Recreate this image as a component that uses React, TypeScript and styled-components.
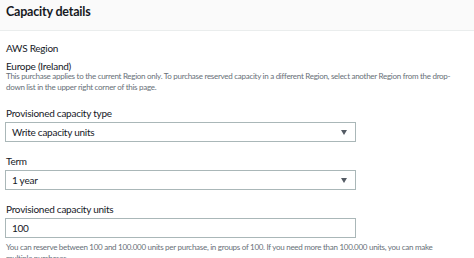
import styled, { createGlobalStyle } from "styled-components"

const Global = createGlobalStyle`
	html, body {
		margin: 0;
		padding: 0;
		background: #fff;
	}
	body {
		font-family: Lato, "Noto Sans", sans-serif;
		color: #16191f;
	}
`

const Panel = styled.div`
	width: 474px;
	height: 258px;
	overflow: hidden;
	background: #fff;
`

const Header = styled.div`
	height: 30px;
	box-sizing: border-box;
	padding: 4px 6px 0;
	background: #fafafa;
	border-bottom: 1px solid #eaeded;
	box-sizing: content-box;
	height: 26px;

	h2 {
		margin: 0;
		font-size: 12.5px;
		line-height: 15px;
		font-weight: 700;
		letter-spacing: -0.2px;
	}
`

const Body = styled.div`
	padding: 10px 14px 0 6px;
	display: flex;
	flex-direction: column;
`

const Field = styled.div<{ $gap?: number }>`
	display: flex;
	flex-direction: column;
	margin-bottom: ${(p) => p.$gap ?? 12}px;
`

const Label = styled.div`
	font-size: 10px;
	line-height: 14px;
	letter-spacing: -0.25px;
	margin-bottom: 2px;
`

const Value = styled.div`
	font-size: 10px;
	line-height: 14px;
	letter-spacing: -0.25px;
	margin-top: 2px;
`

const Hint = styled.div<{ $top?: number }>`
	font-size: 8px;
	line-height: 11px;
	letter-spacing: -0.28px;
	color: #687078;
	margin-top: ${(p) => p.$top ?? 0}px;
`

const Box = styled.div`
	box-sizing: border-box;
	width: 351px;
	height: 20px;
	margin-left: -1px;
	border: 1px solid #aab7b8;
	display: flex;
	align-items: center;
	justify-content: space-between;
	padding: 0 8px 0 6px;
	font-size: 10px;
	letter-spacing: -0.25px;
	background: #fff;
`

const Caret = () => (
	<svg width="6" height="5" viewBox="0 0 6 5">
		<path d="M0 0 L6 0 L3 5 Z" fill="#545b64" />
	</svg>
)

const App = () => {
	return (
		<Panel>
			<Global />
			<Header>
				<h2>Capacity details</h2>
			</Header>
			<Body>
				<Field $gap={13}>
					<Label>AWS Region</Label>
					<Value>Europe (Ireland)</Value>
					<Hint $top={-2}>
						This purchase applies to the current Region only. To purchase reserved capacity in a different Region, select another Region from the drop-down list in the upper right corner of this page.
					</Hint>
				</Field>
				<Field>
					<Label>Provisioned capacity type</Label>
					<Box>
						<span>Write capacity units</span>
						<Caret />
					</Box>
				</Field>
				<Field>
					<Label>Term</Label>
					<Box>
						<span>1 year</span>
						<Caret />
					</Box>
				</Field>
				<Field>
					<Label>Provisioned capacity units</Label>
					<Box>
						<span>100</span>
					</Box>
					<Hint $top={4}>
						You can reserve between 100 and 100.000 units per purchase, in groups of 100. If you need more than 100.000 units, you can make multiple purchases.
					</Hint>
				</Field>
			</Body>
		</Panel>
	)
}

export default App
